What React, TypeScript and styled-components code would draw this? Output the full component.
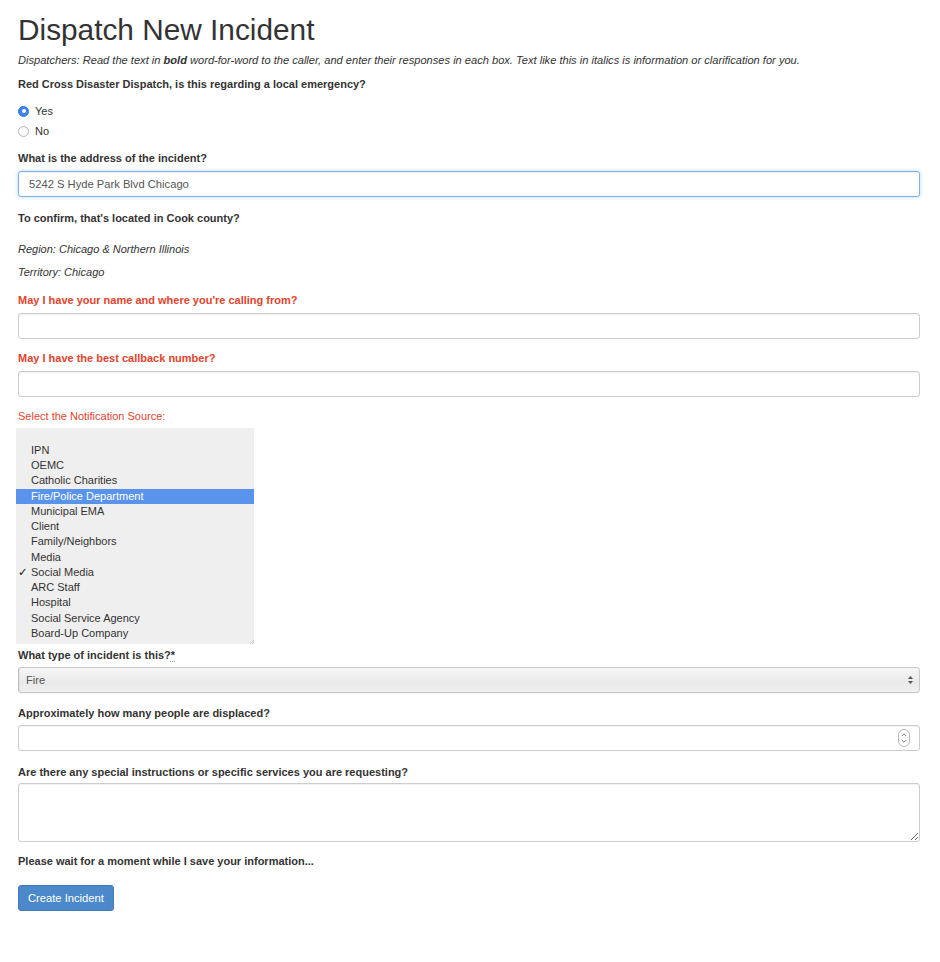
import React from "react";
import styled, { createGlobalStyle } from "styled-components";

const GlobalStyle = createGlobalStyle`
  html, body { margin: 0; padding: 0; background: #fff; }
  body {
    font-family: "Liberation Sans", Helvetica, Arial, sans-serif;
    font-size: 11px;
    line-height: 16px;
    color: #333;
  }
  * { box-sizing: border-box; }
`;

const Page = styled.div`
  width: 940px;
  padding: 13px 20px 40px 18px;
`;

const Title = styled.h1`
  margin: 0 0 6px;
  font-size: 29.8px;
  line-height: 33px;
  font-weight: 400;
  color: #333;
`;

const Intro = styled.p`
  margin: 0 0 8px;
  font-style: italic;
  font-size: 11.1px;
  line-height: 16px;
  b { font-weight: 700; }
`;

const Label = styled.label<{ $red?: boolean; $plain?: boolean; $mb?: number }>`
  display: block;
  font-weight: ${(p) => (p.$plain ? 400 : 700)};
  color: ${(p) => (p.$red ? "#e4432d" : "#333")};
  font-size: 11px;
  line-height: 16px;
  margin: 0 0 ${(p) => (p.$mb ?? 4)}px;
`;

const Abbr = styled.abbr`
  text-decoration: underline dotted #999;
  text-underline-offset: 2px;
  cursor: help;
`;

const RadioGroup = styled.div`
  display: flex;
  flex-direction: column;
  margin: 0 0 9px;
`;

const RadioRow = styled.label`
  display: flex;
  align-items: center;
  height: 20px;
  gap: 6px;
  font-size: 11px;
  color: #333;
`;

const RadioDot = styled.span<{ $on?: boolean }>`
  width: 11px;
  height: 11px;
  border-radius: 50%;
  flex: none;
  display: inline-flex;
  align-items: center;
  justify-content: center;
  background: ${(p) => (p.$on ? "#3e82f2" : "#fff")};
  border: 1px solid ${(p) => (p.$on ? "#3a7be6" : "#b5b5b5")};
  box-shadow: ${(p) => (p.$on ? "none" : "inset 0 1px 1px rgba(0,0,0,0.06)")};
  &::after {
    content: "";
    width: 4px;
    height: 4px;
    border-radius: 50%;
    background: #fff;
    display: ${(p) => (p.$on ? "block" : "none")};
  }
`;

const FieldGroup = styled.div<{ $mb?: number }>`
  margin: 0 0 ${(p) => (p.$mb ?? 12)}px;
`;

const TextInput = styled.input<{ $focus?: boolean }>`
  display: block;
  width: 100%;
  height: 26px;
  padding: 0 10px;
  font-family: "Liberation Sans", Helvetica, Arial, sans-serif;
  font-size: 11.2px;
  color: #555;
  background: #fff;
  border: 1px solid ${(p) => (p.$focus ? "#7fb2ea" : "#cccccc")};
  border-radius: 3px;
  box-shadow: ${(p) =>
    p.$focus
      ? "inset 0 1px 1px rgba(0,0,0,0.05), 0 0 4px rgba(102,165,233,0.45)"
      : "inset 0 1px 1px rgba(0,0,0,0.06)"};
  outline: none;
  -moz-appearance: textfield;
  &::-webkit-outer-spin-button,
  &::-webkit-inner-spin-button {
    -webkit-appearance: none;
    margin: 0;
  }
`;

const ConfirmLabel = styled(Label)`
  margin-bottom: 15px;
`;

const InfoBlock = styled.div`
  margin: 0 0 12px;
  display: flex;
  flex-direction: column;
  gap: 7px;
`;

const InfoLine = styled.p`
  margin: 0;
  font-style: italic;
  font-size: 11px;
  line-height: 16px;
`;

const ListBox = styled.ul`
  list-style: none;
  margin: 0 0 3px -2px;
  padding: 0 0 2.5px;
  width: 238px;
  background: #efefef;
  position: relative;
`;

const Option = styled.li<{ $selected?: boolean }>`
  display: flex;
  align-items: center;
  height: 15.25px;
  line-height: 13px;
  padding-bottom: 1px;
  font-size: 11px;
  color: ${(p) => (p.$selected ? "#fff" : "#333")};
  background: ${(p) => (p.$selected ? "#5a93ec" : "transparent")};
`;

const Check = styled.span`
  width: 15px;
  flex: none;
  padding-left: 2px;
  font-family: "DejaVu Sans", sans-serif;
  font-size: 11.5px;
  color: #222;
`;

const Grip = styled.svg`
  position: absolute;
  right: 0;
  bottom: 0;
`;

const SelectWrap = styled.div`
  position: relative;
`;

const Select = styled.select`
  display: block;
  width: 100%;
  height: 26px;
  padding: 0 7px;
  font-family: "Liberation Sans", Helvetica, Arial, sans-serif;
  font-size: 11.2px;
  color: #555;
  appearance: none;
  -webkit-appearance: none;
  border: 1px solid #c9c9c9;
  border-left-color: #bdbdbd;
  border-radius: 4px;
  background: linear-gradient(#f6f6f6 0%, #ededed 45%, #e9e9e9 60%, #f0f0f0 100%);
  box-shadow: inset 1px 0 1px rgba(0,0,0,0.05), 0 1px 0 rgba(0,0,0,0.04);
  outline: none;
`;

const Overlay = styled.svg<{ $right: number; $top: number }>`
  position: absolute;
  right: ${(p) => p.$right}px;
  top: ${(p) => p.$top}px;
  pointer-events: none;
`;

const NumberWrap = styled.div`
  position: relative;
`;

const TextArea = styled.textarea`
  display: block;
  width: 100%;
  height: 59px;
  padding: 6px 10px;
  font-family: "Liberation Sans", Helvetica, Arial, sans-serif;
  font-size: 11.2px;
  color: #555;
  border: 1px solid #cccccc;
  border-radius: 3px;
  box-shadow: inset 0 1px 1px rgba(0,0,0,0.06);
  resize: vertical;
  outline: none;
`;

const PrimaryButton = styled.button`
  display: inline-flex;
  align-items: center;
  justify-content: center;
  height: 26px;
  padding: 0 9px;
  font-family: "Liberation Sans", Helvetica, Arial, sans-serif;
  font-size: 11.2px;
  color: #fff;
  background: #4c89ca;
  border: 1px solid #4279b8;
  border-radius: 3px;
  cursor: pointer;
`;

const sources = [
  "",
  "IPN",
  "OEMC",
  "Catholic Charities",
  "Fire/Police Department",
  "Municipal EMA",
  "Client",
  "Family/Neighbors",
  "Media",
  "Social Media",
  "ARC Staff",
  "Hospital",
  "Social Service Agency",
  "Board-Up Company",
];

export default function App() {
  return (
    <>
      <GlobalStyle />
      <Page>
        <Title>Dispatch New Incident</Title>
        <Intro>
          Dispatchers: Read the text in <b>bold</b> word-for-word to the caller, and enter their
          responses in each box. Text like this in italics is information or clarification for you.
        </Intro>

        <Label $mb={9}>Red Cross Disaster Dispatch, is this regarding a local emergency?</Label>
        <RadioGroup>
          <RadioRow>
            <RadioDot $on />
            Yes
          </RadioRow>
          <RadioRow>
            <RadioDot />
            No
          </RadioRow>
        </RadioGroup>

        <FieldGroup $mb={13}>
          <Label $mb={5}>What is the address of the incident?</Label>
          <TextInput $focus defaultValue="5242 S Hyde Park Blvd Chicago" />
        </FieldGroup>

        <ConfirmLabel>To confirm, that's located in Cook county?</ConfirmLabel>
        <InfoBlock>
          <InfoLine>Region: Chicago &amp; Northern Illinois</InfoLine>
          <InfoLine>Territory: Chicago</InfoLine>
        </InfoBlock>

        <FieldGroup $mb={11}>
          <Label $red $mb={5}>May I have your name and where you're calling from?</Label>
          <TextInput />
        </FieldGroup>

        <FieldGroup $mb={11}>
          <Label $red $mb={5}>May I have the best callback number?</Label>
          <TextInput />
        </FieldGroup>

        <Label $red $plain $mb={4}>Select the Notification Source:</Label>
        <ListBox role="listbox" aria-multiselectable="true">
          {sources.map((s, i) => (
            <Option key={i} role="option" $selected={s === "Fire/Police Department"}>
              <Check>{s === "Social Media" ? "✓" : ""}</Check>
              {s}
            </Option>
          ))}
          <Grip width="4" height="4" viewBox="0 0 4 4">
            <path d="M4 0 L0 4 M4 2 L2 4" stroke="#aaa" strokeWidth="0.6" />
          </Grip>
        </ListBox>

        <FieldGroup>
          <Label>
            What type of incident is this?<Abbr title="required">*</Abbr>
          </Label>
          <SelectWrap>
            <Select defaultValue="Fire">
              <option>Fire</option>
              <option>Flood</option>
              <option>Storm</option>
            </Select>
            <Overlay $right={6} $top={8} width="7" height="10" viewBox="0 0 7 10">
              <path d="M3.5 1 L6 4 L1 4 Z" fill="#555" />
              <path d="M1 6 L6 6 L3.5 9 Z" fill="#555" />
            </Overlay>
          </SelectWrap>
        </FieldGroup>

        <FieldGroup $mb={13}>
          <Label>Approximately how many people are displaced?</Label>
          <NumberWrap>
            <TextInput type="number" />
            <Overlay $right={10} $top={4} width="12" height="18" viewBox="0 0 12 18">
              <rect x="0.5" y="0.5" width="11" height="17" rx="5.5" fill="#fff" stroke="#b9b9b9" />
              <path d="M3.8 7 L6 4.8 L8.2 7" fill="none" stroke="#777" strokeWidth="0.9" />
              <path d="M3.8 11 L6 13.2 L8.2 11" fill="none" stroke="#777" strokeWidth="0.9" />
            </Overlay>
          </NumberWrap>
        </FieldGroup>

        <FieldGroup $mb={11}>
          <Label $mb={3}>Are there any special instructions or specific services you are requesting?</Label>
          <TextArea />
        </FieldGroup>

        <Label $mb={16}>Please wait for a moment while I save your information...</Label>
        <PrimaryButton type="button">Create Incident</PrimaryButton>
      </Page>
    </>
  );
}
